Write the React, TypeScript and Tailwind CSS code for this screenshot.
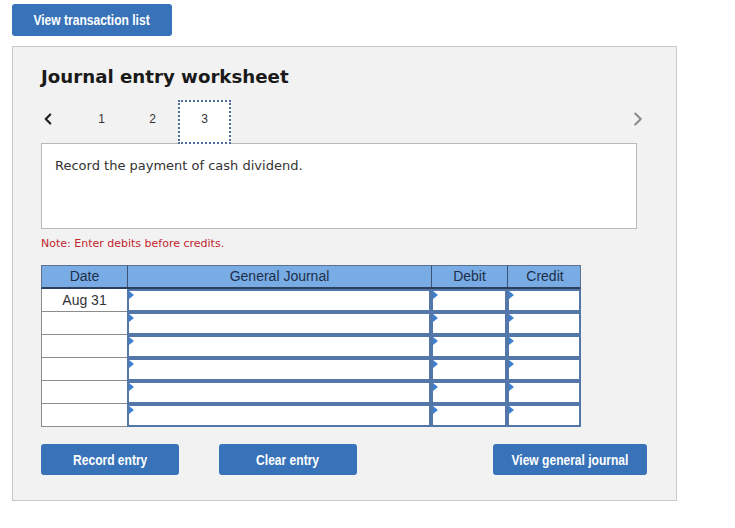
import { ChevronLeft, ChevronRight } from 'lucide-react';

function BlueButton({ label, className }: { label: string; className: string }) {
  return (
    <button className={`h-[31px] rounded-[3px] bg-[#3873b9] text-white font-['Liberation_Sans',Arial,sans-serif] ${className}`}>
      <span className="inline-block scale-x-[0.86] text-[14px] font-bold whitespace-nowrap">{label}</span>
    </button>
  );
}

function InputCell() {
  return (
    <div className="relative h-[23px] bg-white border-2 border-[#5277a8]">
      <span className="absolute left-0 top-0 w-0 h-0 border-y-[4px] border-y-transparent border-l-[5px] border-l-[#3d7fd0]" />
    </div>
  );
}

export default function App() {
  const rows = ['Aug 31', '', '', '', '', ''];

  return (
    <div className="w-[735px] h-[528px] bg-white overflow-hidden font-['Liberation_Sans',Arial,sans-serif]">
      <div className="pt-[4px] pl-[12px]">
        <BlueButton label="View transaction list" className="w-[160px] h-[32px]" />
      </div>

      <div className="ml-[12px] mt-[10px] w-[665px] h-[455px] bg-[#f2f2f2] border border-[#c9c9c9] pl-[28px] pt-[18px]">
        <h1 className="text-[18.2px] leading-[24px] font-bold text-[#1a1a1a] font-['DejaVu_Sans',Verdana,sans-serif]">
          Journal entry worksheet
        </h1>

        {/* step tabs */}
        <div className="mt-[12px] w-[604px] h-[42px] flex items-start">
          <div className="w-[35px] h-[36px] flex items-center">
            <ChevronLeft className="w-[18px] h-[18px] -ml-[2px] text-[#222]" strokeWidth={3} />
          </div>
          <div className="w-[51px] h-[36px] flex items-center justify-center text-[12px] text-[#333]">1</div>
          <div className="w-[51px] h-[36px] flex items-center justify-center text-[12px] text-[#333]">2</div>
          <div className="relative z-10 w-[53px] h-[44px] -mt-[1px] bg-white border-2 border-dotted border-[#4d6e9c] flex items-start pt-[8px] justify-center text-[12px] text-[#333]">
            3
          </div>
          <div className="ml-auto -mr-[4px] h-[36px] flex items-center">
            <ChevronRight className="w-[22px] h-[22px] text-[#8a8a8a]" strokeWidth={2.25} />
          </div>
        </div>

        <div className="w-[596px] h-[86px] bg-white border border-[#b9b9b9] px-[13px] pt-[13px] text-[13px] leading-[18px] text-[#333] font-['DejaVu_Sans',Verdana,sans-serif]">
          Record the payment of cash dividend.
        </div>

        <p className="mt-[8px] text-[11px] leading-[14px] text-[#c0262d] font-['DejaVu_Sans',Verdana,sans-serif]">
          Note: Enter debits before credits.
        </p>

        {/* journal table */}
        <div className="mt-[14px] w-[540px]">
          <div className="grid grid-cols-[86px_304px_76px_74px] h-[24px] bg-[#79ace4] border border-[#5d7290] border-b-2 border-b-[#2c3f5c] text-[14px] text-[#1d2f4a]">
            <div className="flex items-center justify-center border-r border-[#3d5375]">Date</div>
            <div className="flex items-center justify-center border-r border-[#3d5375]">General Journal</div>
            <div className="flex items-center justify-center border-r border-[#3d5375]">Debit</div>
            <div className="flex items-center justify-center">Credit</div>
          </div>
          {rows.map((d, i) => (
            <div key={i} className="grid grid-cols-[86px_304px_76px_74px]">
              <div className="h-[23px] bg-white border-l border-b border-[#8c8c8c] flex items-center justify-center text-[14px] text-[#333]">
                {d}
              </div>
              <InputCell />
              <InputCell />
              <InputCell />
            </div>
          ))}
        </div>

        <div className="mt-[17px] w-[606px] flex items-center">
          <BlueButton label="Record entry" className="w-[138px]" />
          <BlueButton label="Clear entry" className="w-[138px] ml-[40px]" />
          <BlueButton label="View general journal" className="w-[154px] ml-auto" />
        </div>
      </div>
    </div>
  );
}
